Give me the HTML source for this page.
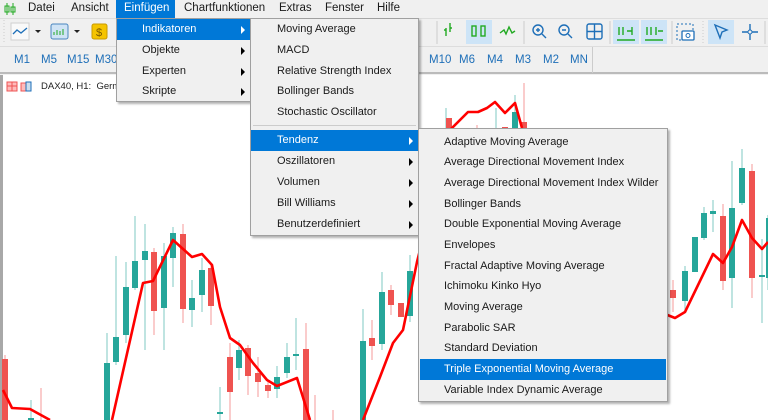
<!DOCTYPE html>
<html><head><meta charset="utf-8"><style>
*{margin:0;padding:0;box-sizing:border-box}
body{width:768px;height:420px;overflow:hidden;background:#f0f0f0;font-family:"Liberation Sans",sans-serif;font-size:11px;color:#1a1a1a;position:relative}
.abs{position:absolute}
.mb span{position:absolute;top:2px;font-size:11.5px}
.menu{position:absolute;background:#f0f0f0;border:1px solid #a0a0a0;box-shadow:2px 2px 2px rgba(0,0,0,.3)}
.it{position:absolute;left:0;right:0;height:21px;line-height:21px;white-space:nowrap}
.hl{background:#0078d7;color:#fff}
.arr{position:absolute;right:5px;top:7px;width:0;height:0;border-left:4px solid #000;border-top:4px solid transparent;border-bottom:4px solid transparent}
.hl .arr{border-left-color:#fff}
.tf span{position:absolute;top:54px;color:#1e6fb8;font-size:11.5px}
</style></head><body>
<!-- menu bar -->
<div class="abs" style="left:0;top:0;width:768px;height:18px;background:#f0f0f0"></div>
<svg class="abs" style="left:4px;top:3px" width="12" height="12"><line x1="3" y1="0" x2="3" y2="12" stroke="#2a2" /><rect x="1" y="3" width="4" height="6" fill="none" stroke="#2a2"/><line x1="9" y1="0" x2="9" y2="12" stroke="#2a2"/><rect x="7" y="4" width="4" height="5" fill="none" stroke="#2a2"/></svg>
<div class="abs" style="left:116px;top:0;width:59px;height:18px;background:#0078d7"></div>
<div class="mb">
<span style="left:28px">Datei</span><span style="left:71px">Ansicht</span><span style="left:124px;color:#fff">Einfügen</span><span style="left:184px">Chartfunktionen</span><span style="left:279px">Extras</span><span style="left:325px">Fenster</span><span style="left:377px">Hilfe</span></div>
<!-- toolbar -->
<div class="abs" style="left:0;top:18px;width:768px;height:27px;border-top:1px solid #ddd"></div>
<svg class="abs" style="left:0;top:18px" width="768" height="30">
<line x1="4" y1="2" x2="4" y2="26" stroke="#ccc" stroke-dasharray="1 2"/>
<rect x="11" y="5" width="18" height="17" fill="#fff" stroke="#bbb" opacity=".6"/>
<polyline points="13,16 17,12 21,15 27,10" fill="none" stroke="#1e6fb8" stroke-width="1.3"/>
<path d="M35 12h6l-3 3z" fill="#222"/>
<rect x="51" y="6" width="17" height="15" rx="2" fill="#cfe3f5" stroke="#4a86c0"/>
<path d="M54 17v-3M57 17v-5M60 17v-4M63 17v-6" stroke="#2a2"/>
<path d="M74 12h6l-3 3z" fill="#222"/>
<rect x="92" y="6" width="15" height="15" rx="2" fill="#f5c400" stroke="#c99a00"/>
<text x="96" y="18" font-size="11" fill="#7a5a00" font-family="Liberation Sans">$</text>
<text x="402" y="19" font-size="11" fill="#333" font-family="Liberation Sans">er</text>
<line x1="437" y1="3" x2="437" y2="26" stroke="#ccc"/>
<path d="M446 18v-8M444 12h2M450 14v-9M450 10h2" stroke="#2a2" stroke-width="1.4" fill="none"/>
<rect x="466" y="2" width="26" height="24" fill="#cde4f7"/>
<rect x="472" y="8" width="4" height="10" fill="none" stroke="#2a2" stroke-width="1.4"/><rect x="481" y="8" width="4" height="10" fill="none" stroke="#2a2" stroke-width="1.4"/>
<polyline points="500,15 504,12 506,16 509,9 512,15 515,13" fill="none" stroke="#2a2" stroke-width="1.4"/>
<line x1="524" y1="3" x2="524" y2="26" stroke="#ccc"/>
<circle cx="538" cy="12" r="5" fill="none" stroke="#1e6fb8" stroke-width="1.4"/><path d="M542 16l4 4M536 12h4M538 10v4" stroke="#1e6fb8" stroke-width="1.4"/>
<circle cx="564" cy="12" r="5" fill="none" stroke="#1e6fb8" stroke-width="1.4"/><path d="M568 16l4 4M562 12h4" stroke="#1e6fb8" stroke-width="1.4"/>
<rect x="587" y="6" width="15" height="15" rx="2" fill="none" stroke="#1e6fb8" stroke-width="1.4"/><path d="M594.5 6v15M587 13.5h15" stroke="#1e6fb8" stroke-width="1.4"/>
<line x1="610" y1="3" x2="610" y2="26" stroke="#ccc"/>
<rect x="613" y="2" width="26" height="24" fill="#cde4f7"/><rect x="641" y="2" width="26" height="24" fill="#cde4f7"/>
<path d="M619 9v8M623 9v8M627 13h5M632 9v8M617 22h18" stroke="#2a2" stroke-width="1.4"/>
<path d="M647 9v8M651 9v8M656 9v8M658 13h5M645 22h18" stroke="#2a2" stroke-width="1.4"/>
<line x1="672" y1="3" x2="672" y2="26" stroke="#ccc"/>
<rect x="677" y="6" width="16" height="16" fill="none" stroke="#1e6fb8" stroke-dasharray="2 2"/><rect x="682" y="13" width="12" height="9" rx="1" fill="#fff" stroke="#1e6fb8" stroke-width="1.3"/><circle cx="688" cy="17.5" r="2" fill="none" stroke="#1e6fb8"/>
<line x1="703" y1="3" x2="703" y2="26" stroke="#ccc" stroke-dasharray="1 2"/>
<rect x="708" y="2" width="26" height="24" fill="#cde4f7"/>
<path d="M715 7l12 5-5 2-2 6z" fill="none" stroke="#1e6fb8" stroke-width="1.4"/>
<path d="M750 6v16M742 14h16" stroke="#1e6fb8" stroke-width="1.4"/><circle cx="750" cy="14" r="2" fill="#f0f0f0" stroke="#1e6fb8"/>
<line x1="765" y1="3" x2="765" y2="26" stroke="#ccc"/>
</svg>
<!-- timeframe bar -->
<div class="abs" style="left:0;top:46px;width:768px;height:28px;border-top:1px solid #ddd;border-bottom:2px solid #bbb"></div>
<div class="abs" style="left:193px;top:47px;width:1px;height:26px;background:#ccc"></div>
<div class="abs" style="left:592px;top:47px;width:1px;height:26px;background:#ccc"></div>
<div class="tf"><span style="left:14px">M1</span><span style="left:41px">M5</span><span style="left:67px">M15</span><span style="left:95px">M30</span><span style="left:429px">M10</span><span style="left:459px">M6</span><span style="left:487px">M4</span><span style="left:515px">M3</span><span style="left:543px">M2</span><span style="left:570px">MN</span></div>
<!-- chart -->
<div class="abs" style="left:0;top:75px;width:768px;height:345px;background:#fff;border-left:3px solid #a8a8a8"></div>
<svg class="abs" style="left:6px;top:81px" width="30" height="12"><rect x="1" y="1" width="10" height="9" fill="#fbb" stroke="#e55"/><path d="M1 5h10M6 1v9" stroke="#e55"/><rect x="15" y="2" width="5" height="8" fill="#fbb" stroke="#e55"/><rect x="20" y="1" width="5" height="9" fill="#cde" stroke="#1e6fb8"/></svg>
<div class="abs" style="left:41px;top:81px;font-size:9.5px;color:#222">DAX40, H1:&nbsp; Germa</div>
<svg class="abs" style="left:0;top:0" width="768" height="420">
<g stroke-width="1.3" opacity=".45">
<line x1="5" y1="355" x2="5" y2="420" stroke="#ef5350"/>
<line x1="31" y1="400" x2="31" y2="420" stroke="#26a69a"/><line x1="41" y1="388" x2="41" y2="420" stroke="#ef5350"/>
<line x1="107" y1="333" x2="107" y2="420" stroke="#26a69a"/><line x1="116" y1="256" x2="116" y2="365" stroke="#26a69a"/>
<line x1="126" y1="262" x2="126" y2="343" stroke="#26a69a"/><line x1="135" y1="216" x2="135" y2="290" stroke="#26a69a"/>
<line x1="145" y1="224" x2="145" y2="350" stroke="#26a69a"/><line x1="154" y1="248" x2="154" y2="335" stroke="#ef5350"/>
<line x1="164" y1="243" x2="164" y2="350" stroke="#26a69a"/><line x1="173" y1="227" x2="173" y2="287" stroke="#26a69a"/>
<line x1="183" y1="224" x2="183" y2="323" stroke="#ef5350"/><line x1="192" y1="280" x2="192" y2="327" stroke="#26a69a"/>
<line x1="202" y1="258" x2="202" y2="312" stroke="#26a69a"/><line x1="211" y1="263" x2="211" y2="325" stroke="#ef5350"/>
<line x1="220" y1="387" x2="220" y2="420" stroke="#26a69a"/><line x1="230" y1="343" x2="230" y2="420" stroke="#ef5350"/>
<line x1="239" y1="340" x2="239" y2="380" stroke="#26a69a"/><line x1="248" y1="345" x2="248" y2="395" stroke="#ef5350"/>
<line x1="258" y1="357" x2="258" y2="397" stroke="#ef5350"/><line x1="268" y1="380" x2="268" y2="398" stroke="#ef5350"/>
<line x1="277" y1="366" x2="277" y2="398" stroke="#26a69a"/><line x1="287" y1="343" x2="287" y2="378" stroke="#26a69a"/>
<line x1="296" y1="318" x2="296" y2="370" stroke="#26a69a"/><line x1="306" y1="323" x2="306" y2="420" stroke="#ef5350"/>
<line x1="315" y1="395" x2="315" y2="420" stroke="#ef5350"/><line x1="333" y1="410" x2="333" y2="420" stroke="#ef5350"/>
<line x1="363" y1="309" x2="363" y2="420" stroke="#26a69a"/><line x1="372" y1="320" x2="372" y2="360" stroke="#ef5350"/>
<line x1="382" y1="272" x2="382" y2="350" stroke="#26a69a"/><line x1="391" y1="285" x2="391" y2="315" stroke="#ef5350"/>
<line x1="410" y1="255" x2="410" y2="322" stroke="#26a69a"/>
<line x1="446" y1="108" x2="446" y2="130" stroke="#26a69a"/><line x1="477" y1="125" x2="477" y2="130" stroke="#ef5350"/>
<line x1="496" y1="108" x2="496" y2="130" stroke="#26a69a"/><line x1="515" y1="95" x2="515" y2="130" stroke="#26a69a"/><line x1="524" y1="83" x2="524" y2="130" stroke="#ef5350"/>
<line x1="673" y1="280" x2="673" y2="312" stroke="#ef5350"/><line x1="685" y1="266" x2="685" y2="310" stroke="#26a69a"/>
<line x1="704" y1="207" x2="704" y2="240" stroke="#26a69a"/><line x1="713" y1="200" x2="713" y2="232" stroke="#26a69a"/>
<line x1="723" y1="204" x2="723" y2="290" stroke="#ef5350"/><line x1="732" y1="161" x2="732" y2="308" stroke="#26a69a"/>
<line x1="742" y1="149" x2="742" y2="205" stroke="#26a69a"/><line x1="752" y1="164" x2="752" y2="298" stroke="#ef5350"/>
<line x1="762" y1="239" x2="762" y2="323" stroke="#26a69a"/><line x1="768" y1="215" x2="768" y2="290" stroke="#26a69a"/>
</g>
<g>
<rect x="2" y="359" width="6" height="61" fill="#ef5350"/>
<rect x="28" y="418" width="6" height="2" fill="#26a69a"/>
<rect x="104" y="363" width="6" height="57" fill="#26a69a"/><rect x="113" y="337" width="6" height="25" fill="#26a69a"/>
<rect x="123" y="287" width="6" height="48" fill="#26a69a"/><rect x="132" y="261" width="6" height="27" fill="#26a69a"/>
<rect x="142" y="251" width="6" height="9" fill="#26a69a"/><rect x="151" y="252" width="6" height="59" fill="#ef5350"/>
<rect x="161" y="256" width="6" height="52" fill="#26a69a"/><rect x="170" y="233" width="6" height="25" fill="#26a69a"/>
<rect x="180" y="234" width="6" height="75" fill="#ef5350"/><rect x="189" y="298" width="6" height="12" fill="#26a69a"/>
<rect x="199" y="270" width="6" height="25" fill="#26a69a"/><rect x="208" y="268" width="6" height="38" fill="#ef5350"/>
<rect x="217" y="412" width="6" height="2" fill="#26a69a"/><rect x="227" y="357" width="6" height="35" fill="#ef5350"/>
<rect x="236" y="350" width="6" height="18" fill="#26a69a"/><rect x="245" y="348" width="6" height="28" fill="#ef5350"/>
<rect x="255" y="373" width="6" height="9" fill="#ef5350"/><rect x="265" y="385" width="6" height="6" fill="#ef5350"/>
<rect x="274" y="377" width="6" height="12" fill="#26a69a"/><rect x="284" y="357" width="6" height="16" fill="#26a69a"/>
<rect x="293" y="354" width="6" height="2" fill="#26a69a"/><rect x="303" y="349" width="6" height="71" fill="#ef5350"/>
<rect x="360" y="341" width="6" height="79" fill="#26a69a"/><rect x="369" y="338" width="6" height="8" fill="#ef5350"/>
<rect x="379" y="292" width="6" height="52" fill="#26a69a"/><rect x="388" y="290" width="6" height="15" fill="#ef5350"/>
<rect x="398" y="303" width="6" height="14" fill="#ef5350"/><rect x="407" y="271" width="6" height="45" fill="#26a69a"/>
<rect x="446" y="118" width="6" height="12" fill="#ef5350"/><rect x="502" y="127" width="6" height="3" fill="#ef5350"/>
<rect x="512" y="112" width="6" height="18" fill="#26a69a"/><rect x="521" y="122" width="6" height="8" fill="#ef5350"/>
<rect x="670" y="290" width="6" height="8" fill="#ef5350"/><rect x="682" y="271" width="6" height="30" fill="#26a69a"/>
<rect x="692" y="237" width="6" height="35" fill="#26a69a"/><rect x="701" y="213" width="6" height="25" fill="#26a69a"/>
<rect x="710" y="211" width="6" height="3" fill="#26a69a"/><rect x="720" y="216" width="6" height="65" fill="#ef5350"/>
<rect x="729" y="208" width="6" height="70" fill="#26a69a"/><rect x="739" y="168" width="6" height="35" fill="#26a69a"/>
<rect x="749" y="171" width="6" height="107" fill="#ef5350"/><rect x="759" y="275" width="6" height="2" fill="#26a69a"/>
<rect x="766" y="218" width="3" height="60" fill="#26a69a"/>
</g>
<g fill="none" stroke="#ff0000" stroke-width="2.6" stroke-linejoin="round">
<polyline points="3,390 12,408 30,409 50,420"/>
<polyline points="112,420 143,283 153,281 173,240 192,257 202,254 212,265 220,307 230,338 240,345 253,363 267,380 277,386 297,378 310,420"/>
<polyline points="363,420 380,377 393,343 403,330 417,262 425,230 440,170 450,130 468,112 478,112 487,108 495,102 505,113 515,103 522,128"/>
<polyline points="665,314 675,318 685,312 713,254 723,263 732,247 742,220 752,238 762,249 768,242"/>
</g>
</svg>
<!-- menu 1 -->
<div class="menu" style="left:116px;top:18px;width:135px;height:84px">
<div class="it hl" style="top:0"><span style="position:absolute;left:25px">Indikatoren</span><i class="arr"></i></div>
<div class="it" style="top:21px"><span style="position:absolute;left:25px">Objekte</span><i class="arr"></i></div>
<div class="it" style="top:42px"><span style="position:absolute;left:25px">Experten</span><i class="arr"></i></div>
<div class="it" style="top:62px"><span style="position:absolute;left:25px">Skripte</span><i class="arr"></i></div>
</div>
<!-- menu 2 -->
<div class="menu" style="left:250px;top:18px;width:169px;height:218px">
<div class="it" style="top:0"><span style="position:absolute;left:26px">Moving Average</span></div>
<div class="it" style="top:21px"><span style="position:absolute;left:26px">MACD</span></div>
<div class="it" style="top:42px"><span style="position:absolute;left:26px">Relative Strength Index</span></div>
<div class="it" style="top:62px"><span style="position:absolute;left:26px">Bollinger Bands</span></div>
<div class="it" style="top:83px"><span style="position:absolute;left:26px">Stochastic Oscillator</span></div>
<div style="position:absolute;left:2px;right:2px;top:106px;height:1px;background:#ccc"></div>
<div class="it hl" style="top:111px"><span style="position:absolute;left:26px">Tendenz</span><i class="arr"></i></div>
<div class="it" style="top:132px"><span style="position:absolute;left:26px">Oszillatoren</span><i class="arr"></i></div>
<div class="it" style="top:153px"><span style="position:absolute;left:26px">Volumen</span><i class="arr"></i></div>
<div class="it" style="top:174px"><span style="position:absolute;left:26px">Bill Williams</span><i class="arr"></i></div>
<div class="it" style="top:195px"><span style="position:absolute;left:26px">Benutzerdefiniert</span><i class="arr"></i></div>
</div>
<!-- menu 3 -->
<div class="menu" style="left:418px;top:128px;width:250px;height:274px">
<div class="it" style="top:3px"><span style="position:absolute;left:25px">Adaptive Moving Average</span></div>
<div class="it" style="top:23px"><span style="position:absolute;left:25px">Average Directional Movement Index</span></div>
<div class="it" style="top:44px"><span style="position:absolute;left:25px">Average Directional Movement Index Wilder</span></div>
<div class="it" style="top:65px"><span style="position:absolute;left:25px">Bollinger Bands</span></div>
<div class="it" style="top:85px"><span style="position:absolute;left:25px">Double Exponential Moving Average</span></div>
<div class="it" style="top:106px"><span style="position:absolute;left:25px">Envelopes</span></div>
<div class="it" style="top:127px"><span style="position:absolute;left:25px">Fractal Adaptive Moving Average</span></div>
<div class="it" style="top:147px"><span style="position:absolute;left:25px">Ichimoku Kinko Hyo</span></div>
<div class="it" style="top:168px"><span style="position:absolute;left:25px">Moving Average</span></div>
<div class="it" style="top:189px"><span style="position:absolute;left:25px">Parabolic SAR</span></div>
<div class="it" style="top:209px"><span style="position:absolute;left:25px">Standard Deviation</span></div>
<div class="it hl" style="top:230px;left:1px;right:1px"><span style="position:absolute;left:24px">Triple Exponential Moving Average</span></div>
<div class="it" style="top:251px"><span style="position:absolute;left:25px">Variable Index Dynamic Average</span></div>
</div>
</body></html>
